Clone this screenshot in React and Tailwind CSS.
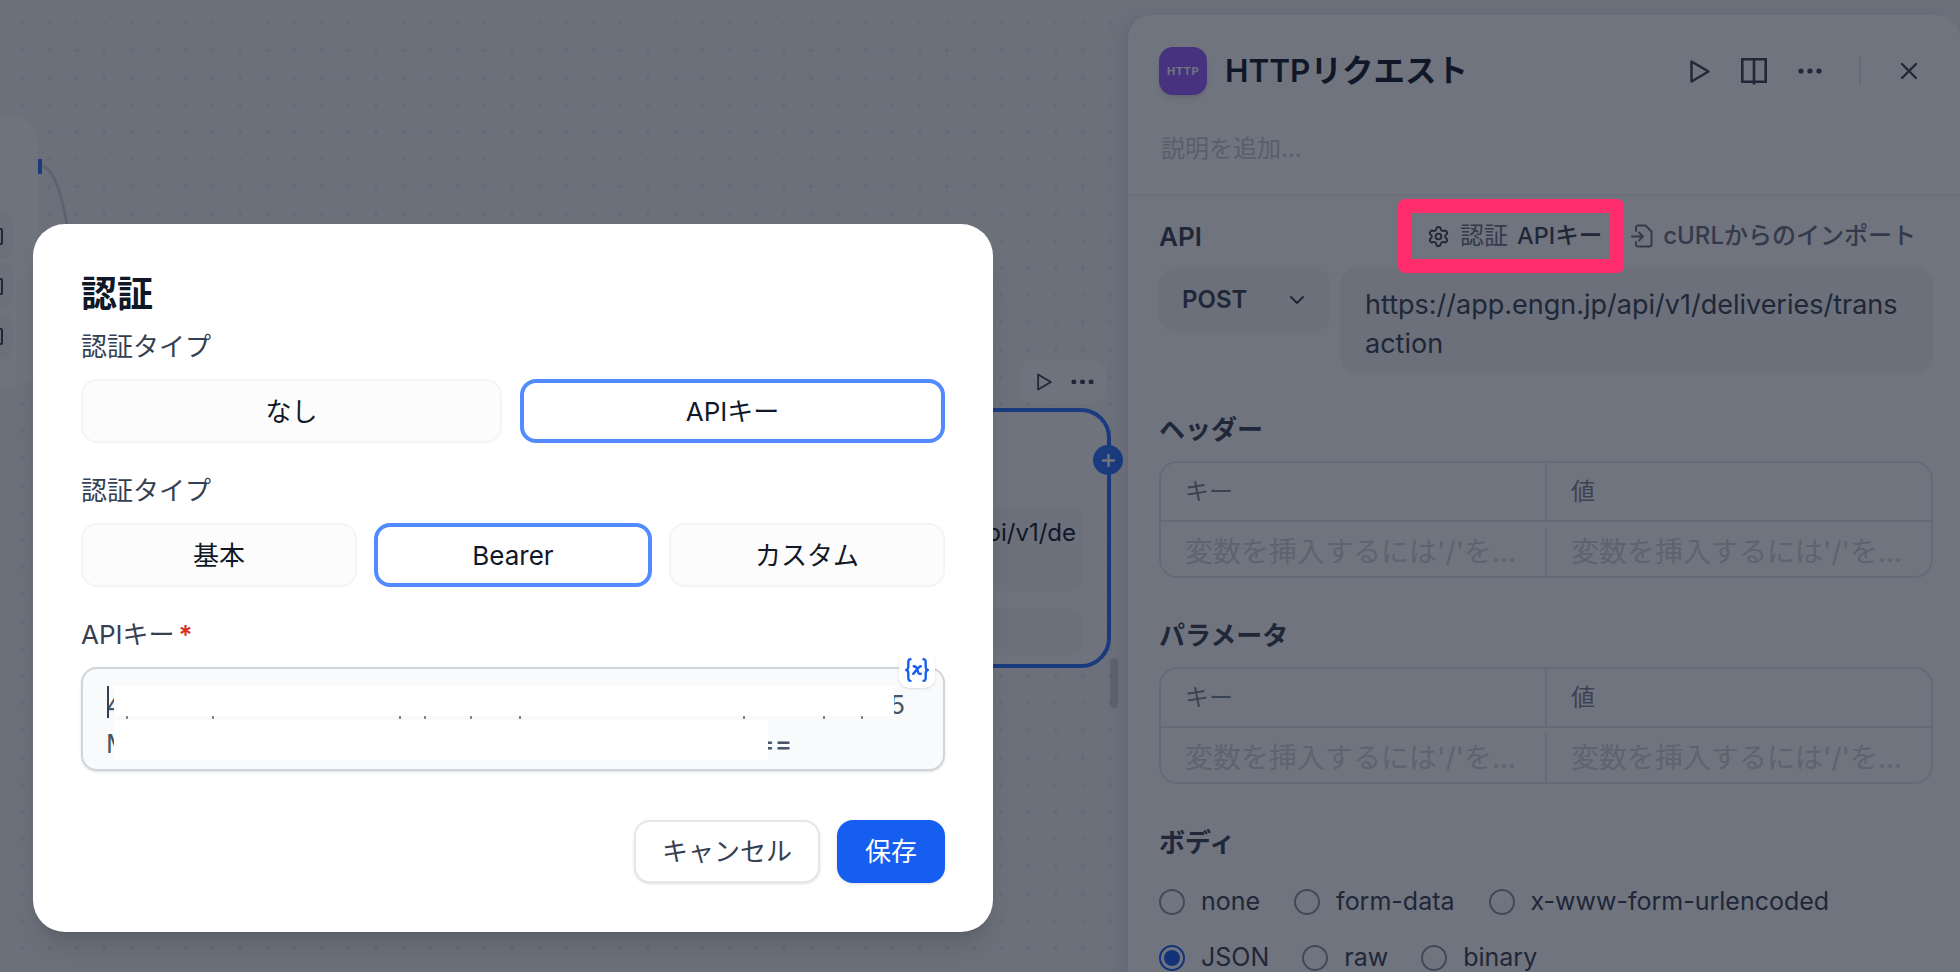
import React from 'react';
import { ChevronDown, Settings, Plus } from 'lucide-react';

const PlayIcon = ({ className }) => (
  <svg viewBox="0 0 20 23" fill="none" stroke="currentColor" strokeWidth="2.4" strokeLinejoin="round" className={className}>
    <path d="M1.5 1.5 L18.5 11.5 L1.5 21.5 Z" />
  </svg>
);

const BookIcon = ({ className }) => (
  <svg viewBox="0 0 26 27" fill="none" stroke="currentColor" strokeWidth="2.6" className={className}>
    <path d="M1.3 1.3 H24.7 V23.7 H1.3 Z M13 1.3 V26.5" />
  </svg>
);

const DotsIcon = ({ className }) => (
  <svg viewBox="0 0 24 6" fill="currentColor" className={className}>
    <circle cx="3" cy="3" r="2.6" />
    <circle cx="12" cy="3" r="2.6" />
    <circle cx="21" cy="3" r="2.6" />
  </svg>
);

const CloseIcon = ({ className }) => (
  <svg viewBox="0 0 18 18" fill="none" stroke="currentColor" strokeWidth="2.4" strokeLinecap="round" className={className}>
    <path d="M2 2 L16 16 M16 2 L2 16" />
  </svg>
);

const ImportIcon = ({ className }) => (
  <svg viewBox="0 0 22 24" fill="none" stroke="currentColor" strokeWidth="2" strokeLinecap="round" strokeLinejoin="round" className={className}>
    <path d="M5 7 V3.5 A2 2 0 0 1 7 1.5 H14.5 L20.5 7.5 V20.5 A2 2 0 0 1 18.5 22.5 H7 A2 2 0 0 1 5 20.5 V18" />
    <path d="M1 12.5 H12 M8 8.5 L12 12.5 L8 16.5" />
  </svg>
);

const VariableIcon = ({ className }) => (
  <svg viewBox="0 0 24 24" fill="none" stroke="currentColor" strokeWidth="2.2" strokeLinecap="round" strokeLinejoin="round" className={className}>
    <path d="M6 2 C3.5 2 4 5 4 8 C4 10.5 3.5 12 2 12 C3.5 12 4 13.5 4 16 C4 19 3.5 22 6 22" />
    <path d="M18 2 C20.5 2 20 5 20 8 C20 10.5 20.5 12 22 12 C20.5 12 20 13.5 20 16 C20 19 20.5 22 18 22" />
    <path d="M9 8.5 C11 8.5 12 10 12.5 12 C13 14.5 13.5 16 15.5 15.5 M15.5 8.5 C13 9 11 13 8.5 15.5" />
  </svg>
);

const KvTable = () => (
  <div className="grid h-[117px] grid-cols-[386px_1fr] rounded-[18px] border-2 border-[#e4e7ec]">
    <div className="flex h-[59px] items-center border-b-2 border-r-2 border-[#e4e7ec] pl-[24px] text-[24px] text-[#7b8494]">キー</div>
    <div className="flex h-[59px] items-center border-b-2 border-[#e4e7ec] pl-[24px] text-[24px] text-[#7b8494]">値</div>
    <div className="flex items-center border-r-2 border-[#e4e7ec] pl-[24px] text-[28px] whitespace-nowrap text-[#d0d5dc]">変数を挿入するには'/'を...</div>
    <div className="flex items-center pl-[24px] text-[28px] whitespace-nowrap text-[#d0d5dc]">変数を挿入するには'/'を...</div>
  </div>
);

const Radio = ({ label, checked, className }) => (
  <div className={`flex items-center gap-[16px] ${className || ''}`}>
    {checked ? (
      <span className="flex h-[26px] w-[26px] items-center justify-center rounded-full border-[2.5px] border-[#155eef]">
        <span className="h-[16px] w-[16px] rounded-full bg-[#155eef]" />
      </span>
    ) : (
      <span className="h-[26px] w-[26px] rounded-full border-[2.5px] border-[#8b93a3]" />
    )}
    <span className="text-[25px] text-[#354052]">{label}</span>
  </div>
);

const ChoiceButton = ({ label, active }) => (
  <button
    className={
      active
        ? 'h-[64px] rounded-[16px] border-[4px] border-[#528bff] bg-white text-[26px] text-[#101828]'
        : 'h-[64px] rounded-[16px] border-2 border-[#f2f4f7] bg-[#fcfcfd] text-[26px] text-[#101828]'
    }
  >
    {label}
  </button>
);

const Canvas = () => (
  <div className="absolute inset-0 bg-[#f2f4f7] bg-[radial-gradient(circle,#dfe2ea_1.4px,transparent_1.8px)] bg-[length:27.2px_27.2px] bg-[position:9px_10px]">
    {/* left node, cut off by the window */}
    <div className="absolute left-[-40px] top-[117px] h-[269px] w-[78px] rounded-[24px] bg-[#fcfcfd] pt-[96px]">
      {[0, 1, 2].map((i) => (
        <div key={i} className="mb-[4px] flex h-[46px] w-[53px] items-center justify-end rounded-[12px] bg-[#f2f4f7] pr-[10px]">
          <span className="h-[17px] w-[14px] rounded-[2px] border-2 border-[#354052]" />
        </div>
      ))}
    </div>
    <div className="absolute left-[38px] top-[159px] h-[15px] w-[4px] bg-[#2970ff]" />
    <svg className="absolute left-[40px] top-[160px]" width="40" height="80" fill="none">
      <path d="M2 6 C16 10 23 40 29 76" stroke="#d0d5dc" strokeWidth="3" />
    </svg>

    {/* selected node behind the dialog */}
    <div className="absolute left-[1020px] top-[359px] flex h-[45px] w-[86px] items-center rounded-[14px] bg-[#fcfcfd] pl-[17px] text-[#354052]">
      <PlayIcon className="h-[18px] w-[15px]" />
      <DotsIcon className="ml-[19px] w-[23px]" />
    </div>
    <div className="absolute left-[600px] top-[408px] h-[260px] w-[511px] rounded-[30px] border-4 border-[#2970ff] bg-[#fcfcfd]">
      <div className="absolute left-[20px] right-[24px] top-[94px] h-[85px] rounded-[14px] bg-[#f2f4f7] pr-[7px] pt-[9px] text-right text-[24px] text-[#101828]">
        api/v1/de
      </div>
      <div className="absolute left-[20px] right-[24px] top-[196px] h-[47px] rounded-[14px] bg-[#f2f4f7]" />
    </div>
    <div className="absolute left-[1093px] top-[445px] flex h-[30px] w-[30px] items-center justify-center rounded-full bg-[#2970ff] text-white">
      <Plus size={19} strokeWidth={3} />
    </div>
    <div className="absolute left-[1110px] top-[658px] h-[50px] w-[8px] rounded-full bg-[#98a2b2]/40" />
  </div>
);

const SidePanel = () => (
  <div className="absolute left-[1126px] top-[15px] h-[1000px] w-[834px] rounded-[24px] border-l-2 border-[#e4e7ec] bg-white shadow-[-8px_0_16px_rgba(16,24,40,0.06)]">
    <div className="h-[181px] border-b-2 border-[#f2f4f7] pl-[31px] pr-[42px] pt-[32px]">
      <div className="flex h-[48px] items-center">
        <div className="flex h-[48px] w-[48px] items-center justify-center rounded-[14px] bg-[#975bff] text-[11px] font-bold tracking-[0.5px] text-white shadow-md">HTTP</div>
        <div className="ml-[18px] flex-1 text-[31.5px] font-semibold text-[#101828]">HTTPリクエスト</div>
        <PlayIcon className="h-[23px] w-[20px] text-[#354052]" />
        <BookIcon className="ml-[31px] h-[27px] w-[26px] text-[#354052]" />
        <DotsIcon className="ml-[31px] w-[24px] text-[#354052]" />
        <span className="ml-[37px] h-[28px] w-[2px] bg-[#e4e7ec]" />
        <CloseIcon className="ml-[39px] h-[18px] w-[18px] text-[#354052]" />
      </div>
      <div className="ml-[2px] mt-[36px] text-[24px] leading-[36px] text-[#c4c9d2]">説明を追加...</div>
    </div>

    <div className="pl-[31px] pr-[27px]">
      <div className="mr-[17px] mt-[20px] flex h-[40px] items-center">
        <div className="flex-1 text-[26px] font-semibold text-[#354052]">API</div>
        <Settings size={23} strokeWidth={2} className="text-[#354052]" />
        <span className="ml-[10px] text-[24px] text-[#676f83]">認証</span>
        <span className="ml-[9px] text-[23.5px] font-medium text-[#354052]">APIキー</span>
        <ImportIcon className="ml-[29px] h-[24px] w-[22px] text-[#676f83]" />
        <span className="ml-[10px] text-[24px] font-medium text-[#676f83]">cURLからのインポート</span>
      </div>

      <div className="mt-[12px] flex items-start gap-[10px]">
        <div className="flex h-[64px] w-[171px] items-center justify-between rounded-[16px] bg-[#f2f4f7] pl-[23px] pr-[21px] text-[24px] font-semibold text-[#354052]">
          POST
          <ChevronDown size={24} strokeWidth={2} />
        </div>
        <div className="h-[105px] w-[593px] rounded-[16px] bg-[#f2f4f7] pl-[25px] pr-[28px] pt-[17px] text-[27px] leading-[39px] text-[#354052] break-all">
          https://app.engn.jp/api/v1/deliveries/transaction
        </div>
      </div>

      <div className="mt-[39px] text-[26px] font-semibold leading-[36px] text-[#354052]">ヘッダー</div>
      <div className="mt-[13px]"><KvTable /></div>

      <div className="mt-[40px] text-[26px] font-semibold leading-[36px] text-[#354052]">パラメータ</div>
      <div className="mt-[13px]"><KvTable /></div>

      <div className="mt-[41px] text-[26px] font-semibold leading-[36px] text-[#354052]">ボディ</div>
      <div className="mt-[21px] flex h-[40px] items-center">
        <Radio label="none" />
        <Radio label="form-data" className="ml-[34px]" />
        <Radio label="x-www-form-urlencoded" className="ml-[34px]" />
      </div>
      <div className="mt-[16px] flex h-[40px] items-center">
        <Radio label="JSON" checked />
        <Radio label="raw" className="ml-[33px]" />
        <Radio label="binary" className="ml-[33px]" />
      </div>
    </div>
  </div>
);

// what is left of the key's descenders between the two white bars
const keyMarks = [43, 129, 316, 341, 387, 436, 660, 740, 778];

const AuthDialog = () => (
  <div className="absolute left-[33px] top-[224px] h-[708px] w-[960px] rounded-[32px] bg-white px-[48px] pt-[46px] shadow-xl">
    <div className="text-[36px] font-bold leading-[48px] text-[#101828]">認証</div>

    <div className="mt-[11px] text-[26px] leading-[36px] text-[#354052]">認証タイプ</div>
    <div className="mt-[14px] grid grid-cols-[421px_425px] gap-x-[18px]">
      <ChoiceButton label="なし" />
      <ChoiceButton label="APIキー" active />
    </div>

    <div className="mt-[30px] text-[26px] leading-[36px] text-[#354052]">認証タイプ</div>
    <div className="mt-[14px] grid grid-cols-[276px_278px_276px] gap-x-[17px]">
      <ChoiceButton label="基本" />
      <ChoiceButton label="Bearer" active />
      <ChoiceButton label="カスタム" />
    </div>

    <div className="mt-[30px] flex text-[26px] leading-[36px] text-[#354052]">
      APIキー<span className="ml-[4px] font-semibold text-[#d92d20]">*</span>
    </div>
    <div className="relative mt-[14px] h-[104px] rounded-[16px] border-2 border-[#d0d5dc] bg-[#f9fafb] pl-[23px] pt-[16px] text-[26px] leading-[39px] text-[#495464] shadow-sm">
      <div className="flex w-[799px] justify-between"><span>4</span><span>5</span></div>
      <div className="flex w-[686px] justify-between"><span>M</span><span className="font-medium">==</span></div>
      <span className="absolute left-[24px] top-[17px] h-[32px] w-[2px] bg-[#354052]" />
      {/* redacted key */}
      <span className="absolute left-[31px] top-[17px] h-[30px] w-[780px] bg-white" />
      <span className="absolute left-[31px] top-[51px] h-[40px] w-[654px] bg-white" />
      {keyMarks.map((x) => (
        <span key={x} className="absolute top-[47px] h-[3px] w-[2px] bg-[#495464]/70" style={{ left: x }} />
      ))}
      <div className="absolute right-[8px] top-[-17px] flex h-[36px] w-[36px] items-center justify-center rounded-[10px] bg-white text-[#155eef] shadow-sm">
        <VariableIcon className="h-[26px] w-[26px]" />
      </div>
    </div>

    <div className="mt-[49px] flex justify-end gap-[17px]">
      <button className="h-[63px] w-[186px] rounded-[16px] border-2 border-[#e4e7ec] bg-white text-[26px] text-[#354052] shadow-sm">キャンセル</button>
      <button className="h-[63px] w-[108px] rounded-[16px] bg-[#155eef] text-[26px] text-white shadow-sm">保存</button>
    </div>
  </div>
);

export default function App() {
  return (
    <div className="relative h-screen w-full overflow-hidden font-['Inter','Noto_Sans_CJK_JP',sans-serif]">
      <Canvas />
      <SidePanel />
      <div className="absolute inset-0 bg-[#101828]/60" />
      {/* screenshot annotation */}
      <div className="absolute left-[1398px] top-[199px] h-[74px] w-[226px] rounded-[7px] border-[14px] border-[#ff2d6b]" />
      <AuthDialog />
    </div>
  );
}
